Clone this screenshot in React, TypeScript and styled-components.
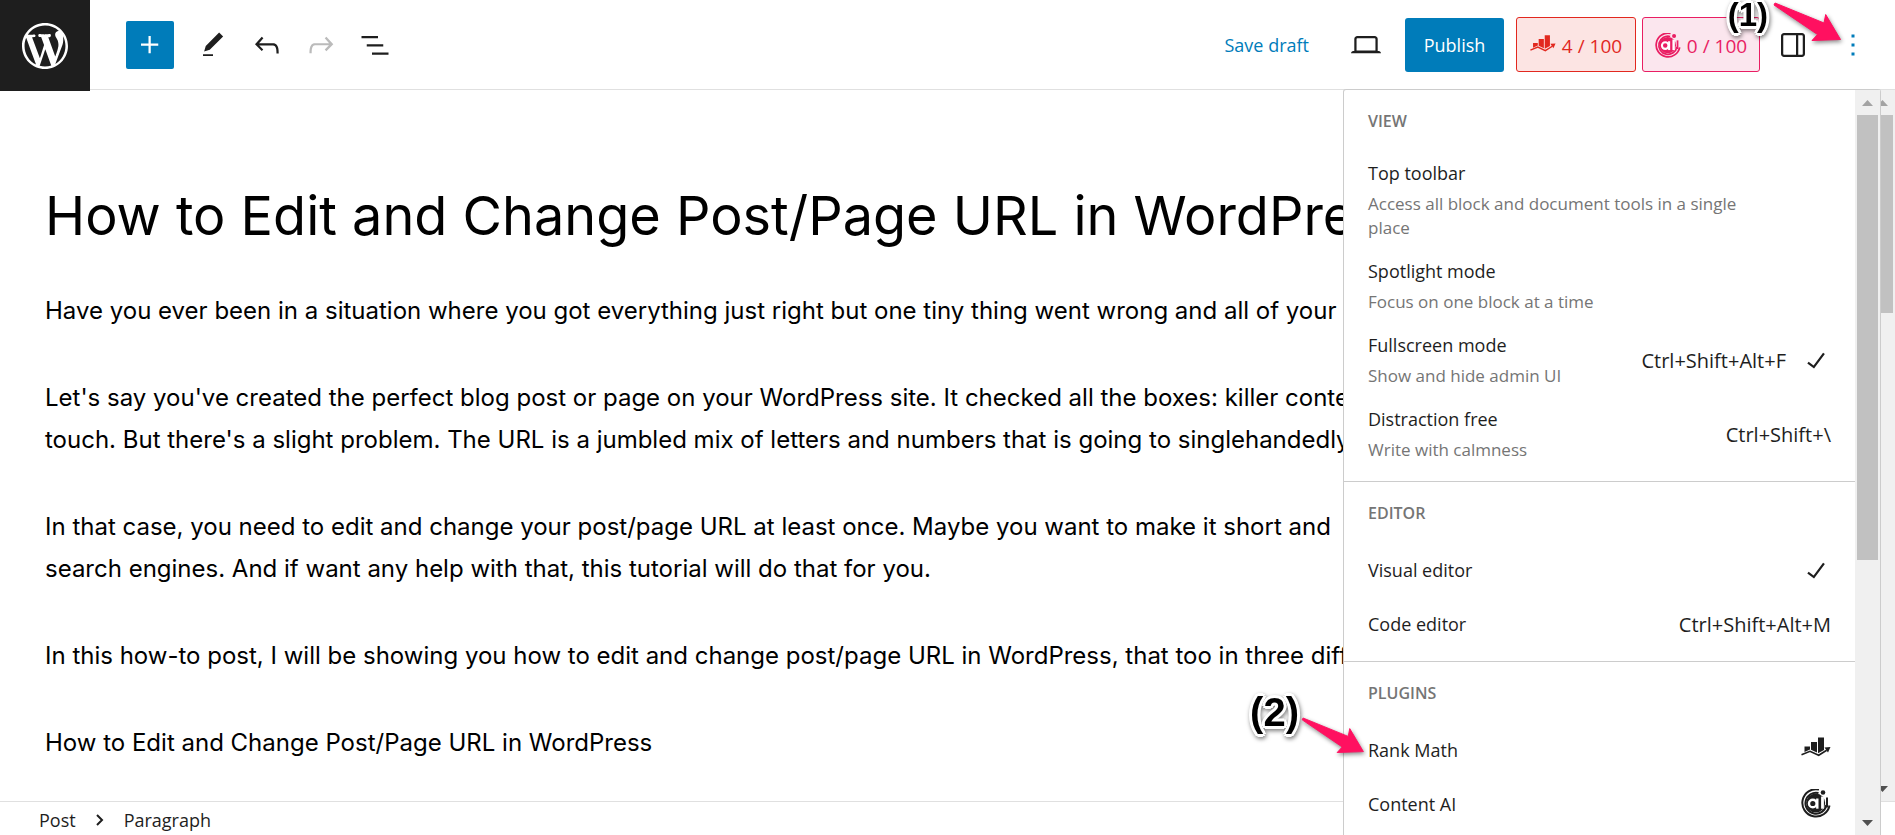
import React from "react";
import styled, { createGlobalStyle, css } from "styled-components";

const Global = createGlobalStyle`
  *, *::before, *::after { box-sizing: border-box; }
  body { margin: 0; background: #fff; overflow: hidden; }
  button { font: inherit; color: inherit; background: none; border: 0; padding: 0; margin: 0; cursor: pointer; }
  svg { display: block; }
`;

const uiFont = `"Segoe UI", "Open Sans", "Noto Sans", sans-serif`;
const blue = "#007cba";
const ink = "#1e1e1e";

const Page = styled.div`
  position: relative;
  display: flex;
  flex-direction: column;
  height: 100vh;
  overflow: hidden;
  font-family: ${uiFont};
  color: ${ink};
`;

const Header = styled.header`
  display: flex;
  align-items: center;
  flex: none;
  height: 90px;
  border-bottom: 1px solid #e0e0e0;
`;

const Home = styled.a`
  display: flex;
  align-items: center;
  justify-content: center;
  align-self: flex-start;
  flex: none;
  width: 90px;
  height: 91px;
  background: ${ink};
  color: #fff;
`;

const Tools = styled.div`
  display: flex;
  align-items: center;
  margin-left: 36px;
`;

const Inserter = styled.button`
  display: flex;
  align-items: center;
  justify-content: center;
  width: 48px;
  height: 48px;
  margin-right: 12px;
  border-radius: 2px;
  background: ${blue};
  color: #fff;
`;

const ToolButton = styled.button<{ $faded?: boolean; $accent?: boolean }>`
  display: flex;
  align-items: center;
  justify-content: center;
  width: 54px;
  height: 54px;
  color: ${(p) => (p.$accent ? blue : p.$faded ? "#bbb" : ink)};
`;

const Actions = styled.div`
  display: flex;
  align-items: center;
  margin-left: auto;
  padding-right: 15px;
  font-size: 18px;
`;

const SaveDraft = styled.button`
  margin-right: 30px;
  color: ${blue};
`;

const Publish = styled.button`
  width: 99px;
  height: 54px;
  margin: 0 12px;
  border-radius: 3px;
  background: ${blue};
  color: #fff;
`;

const Score = styled.button<{ $tone: "red" | "pink" }>`
  display: flex;
  align-items: center;
  justify-content: center;
  gap: 6px;
  width: ${(p) => (p.$tone === "red" ? 120 : 118)}px;
  height: 55px;
  padding-top: 3px;
  margin-right: 6px;
  border: 1px solid;
  border-radius: 3px;
  font-size: 19px;
  ${(p) =>
    p.$tone === "red"
      ? css`color: #e2281f; background: #fce4e3; border-color: #e2281f;`
      : css`color: #e91e63; background: #fbe6ee; border-color: #e91e63;`}
`;

const PanelToggles = styled.div`
  display: flex;
  gap: 6px;
`;

const Body = styled.div`
  display: flex;
  flex: 1;
  min-height: 0;
`;

const Canvas = styled.main`
  flex: 1;
  min-width: 0;
  overflow: hidden;
  padding: 88px 45px 0;
  color: #000;
  font-family: Inter, sans-serif;
  white-space: nowrap;
`;

const Title = styled.h1`
  margin: 0 0 36px;
  font-size: 54px;
  line-height: 76px;
  font-weight: 400;
`;

const Paragraph = styled.p`
  margin: 0 0 45px;
  font-size: 24px;
  line-height: 42px;
`;

const Rail = styled.div`
  display: flex;
  flex-direction: column;
  flex: none;
  width: 25px;
  background: #f0f0f0;
`;

const RailArrow = styled.div<{ $down?: boolean }>`
  display: flex;
  align-items: center;
  justify-content: center;
  height: 25px;
  color: ${(p) => (p.$down ? "#505050" : "#a3a3a3")};
`;

const RailTrack = styled.div`
  flex: 1;
  min-height: 0;
  padding: 0 2px;
`;

const RailThumb = styled.div<{ $share: number }>`
  height: ${(p) => p.$share}%;
  background: #c1c1c1;
`;

const Footer = styled.nav`
  display: flex;
  align-items: center;
  flex: none;
  gap: 20px;
  height: 34px;
  padding: 3px 39px 0;
  border-top: 1px solid #e0e0e0;
  font-size: 18px;
`;

const Menu = styled.div`
  position: absolute;
  top: 89px;
  right: 14px;
  bottom: 0;
  display: flex;
  width: 538px;
  border: 1px solid #ccc;
  border-bottom: 0;
  border-radius: 3px 3px 0 0;
  background: #fff;
`;

const Groups = styled.div`
  flex: 1;
  min-width: 0;
  overflow: hidden;
`;

const Group = styled.section`
  padding: 12px 12px 10px;
  border-bottom: 1px solid #ccc;
`;

const GroupLabel = styled.h2`
  margin: 0 0 11px;
  padding: 0 12px;
  font-size: 16px;
  line-height: 38px;
  font-weight: 600;
  color: #757575;
`;

const Item = styled.button<{ $info?: boolean }>`
  display: flex;
  align-items: center;
  width: 100%;
  min-height: 54px;
  padding: ${(p) => (p.$info ? "6px 12px" : "0 12px")};
  text-align: left;
  font-size: 18px;
`;

const ItemText = styled.span`
  flex: 1;
  max-width: 400px;
  line-height: 32px;
`;

const ItemInfo = styled.span`
  display: block;
  padding: 3px 0;
  font-size: 17px;
  line-height: 24px;
  color: #757575;
`;

const ItemEnd = styled.span<{ $checked?: boolean }>`
  display: flex;
  align-items: center;
  gap: 12px;
  margin-left: auto;
  margin-right: ${(p) => (p.$checked ? -3 : 0)}px;
  font-size: 20px;
`;

const Callout = styled.span<{ $x: number; $y: number; $large?: boolean }>`
  position: absolute;
  right: ${(p) => p.$x}px;
  top: ${(p) => p.$y}px;
  font-family: "Liberation Sans", Arial, sans-serif;
  font-weight: bold;
  font-size: ${(p) => (p.$large ? 40 : 33)}px;
  line-height: ${(p) => (p.$large ? 44 : 28)}px;
  color: #000;
  text-shadow:
    3px 0 #fff, -3px 0 #fff, 0 3px #fff, 0 -3px #fff,
    2px 2px #fff, -2px 2px #fff, 2px -2px #fff, -2px -2px #fff;
  filter: drop-shadow(1px 2px 2px rgba(0, 0, 0, 0.5));
`;

const PointerSvg = styled.svg<{ $x: number; $y: number }>`
  position: absolute;
  right: ${(p) => p.$x}px;
  top: ${(p) => p.$y}px;
  overflow: visible;
  filter: drop-shadow(1px 2px 2px rgba(0, 0, 0, 0.45));
`;

const Pointer = ({ x, y, width, height }: { x: number; y: number; width: number; height: number }) => (
  <PointerSvg $x={x} $y={y} width={width} height={height} viewBox="0 0 67 38" aria-hidden="true">
    <path
      d="M1 0L50 20L51.700 11.500L66.500 36.500L38 37.500L43.500 31.500L0 2Z"
      fill="#ff1060"
      stroke="#ff1060"
      strokeLinejoin="round"
    />
  </PointerSvg>
);

const Icon = ({ d, size = 36 }: { d: string; size?: number }) => (
  <svg width={size} height={size} viewBox="0 0 24 24" fill="currentColor" aria-hidden="true">
    <path d={d} />
  </svg>
);

const paths = {
  plus: "M11 12.5V17.5H12.5V12.5H17.5V11H12.5V6H11V11H6V12.5H11Z",
  pencil: "M20.1 5.1L16.9 2 6.2 12.7l-1.3 4.4 4.5-1.3L20.1 5.1zM4 20.8h8v-1.5H4v1.5z",
  undo: "M18.3 11.7c-.6-.6-1.4-.9-2.3-.9H6.7l2.9-3.3-1.1-1-4.5 5L8.500 16l1-1-2.700-2.700H16c.5 0 .9.2 1.300.5 1 1 1 3.400 1 4.500v.3h1.500v-.2c0-1.500 0-4.300-1.500-5.700z",
  redo: "M15.600 6.500l-1.100 1 2.900 3.300H8c-.9 0-1.700.3-2.300.9-1.400 1.500-1.400 4.200-1.400 5.600v.2h1.500v-.3c0-1.100 0-3.500 1-4.500.3-.3.7-.5 1.300-.5h9.200L14.500 15l1.100 1.100 4.600-4.600-4.600-5z",
  list: "M3 6h11v1.500H3V6zm3.500 5.500h11V13h-11v-1.500zM21 17H10v1.500h11V17z",
  laptop: "M20.5 16h-.7V8c0-1.100-.9-2-2-2H6.200c-1.100 0-2 .9-2 2v8h-.7c-.8 0-1.500.7-1.500 1.500h20c0-.8-.7-1.500-1.500-1.500zM5.700 8c0-.3.2-.5.5-.5h11.600c.3 0 .5.2.5.5v7.600H5.700V8z",
  sidebar: "M18 4H6c-1.100 0-2 .9-2 2v12c0 1.100.9 2 2 2h12c1.100 0 2-.9 2-2V6c0-1.100-.9-2-2-2zm-4 14.500H6c-.3 0-.5-.2-.5-.5V6c0-.3.2-.5.5-.5h8v13zm4.500-.5c0 .3-.2.5-.5.5h-2.500v-13H18c.3 0 .5.2.5.5v12z",
  dots: "M13 19h-2v-2h2v2zm0-6h-2v-2h2v2zm0-6h-2V5h2v2z",
  check: "M16.700 7.100l-6.300 8.500-3.300-2.500-.9 1.200 4.500 3.400L17.900 8z",
  wordpress:
    "M20 10c0-5.510-4.490-10-10-10C4.480 0 0 4.490 0 10c0 5.520 4.480 10 10 10 5.510 0 10-4.480 10-10zM7.780 15.370L4.370 6.220c.55-.02 1.170-.08 1.170-.08.5-.06.44-1.130-.06-1.110 0 0-1.450.11-2.370.11-.18 0-.37 0-.58-.01C4.120 2.690 6.870 1.110 10 1.110c2.330 0 4.450.87 6.050 2.340-.68-.11-1.650.39-1.650 1.580 0 .74.45 1.360.9 2.100.35.61.55 1.360.55 2.460 0 1.490-1.400 5-1.400 5l-3.030-8.370c.54-.02.82-.17.82-.17.5-.05.44-1.250-.06-1.220 0 0-1.440.12-2.380.12-.87 0-2.330-.12-2.330-.12-.5-.03-.56 1.200-.06 1.220l.92.08 1.260 3.410zM17.410 10c.24-.64.74-1.870.43-4.250.7 1.290 1.050 2.710 1.050 4.250 0 3.290-1.730 6.240-4.400 7.780.97-2.590 1.940-5.200 2.920-7.780zM6.100 18.090C3.120 16.650 1.110 13.530 1.110 10c0-1.300.23-2.480.72-3.590C3.250 10.300 4.670 14.200 6.100 18.090zm4.030-6.630l2.580 6.980c-.86.29-1.760.45-2.710.45-.79 0-1.570-.11-2.290-.33.81-2.380 1.620-4.740 2.420-7.100z",
};

const RankIcon = ({ size = 30 }: { size?: number }) => (
  <svg width={size} height={size} viewBox="0 0 30 30" fill="currentColor" aria-hidden="true">
    <path d="M3.500 11.500h5.500v3L3.500 17zM10 7h6v10.500L10 14.700zM17 2.500h6V15l-6 3.200z" />
    <path d="M0.500 19.800l8.500-3.500 8.700 4 8-5" fill="none" stroke="currentColor" strokeWidth="1.600" />
    <path d="M23.500 12.500l6-.5-2.500 5.500z" />
  </svg>
);

const ContentAiIcon = ({ size = 30 }: { size?: number }) => (
  <svg width={size} height={size} viewBox="0 1 30 30" aria-hidden="true">
    <g fill="none" stroke="currentColor" strokeWidth="2">
      <path d="M18 1.500A13.700 13.700 0 1 0 28.500 17.500" />
      <path d="M17.500 5A10.500 10.500 0 1 0 25.300 17" />
    </g>
    <circle cx="14.700" cy="15" r="9.500" fill="currentColor" />
    <circle cx="22" cy="4.500" r="2.300" fill="currentColor" />
    <g fill="none" stroke="#fff">
      <circle cx="11.800" cy="15.500" r="3.800" strokeWidth="2.400" />
      <path d="M16.300 10.500v10.200" strokeWidth="2.400" />
      <path d="M21.500 8.500v12.200" strokeWidth="2.800" />
    </g>
    <path d="M25 9.500h2v10h-2z" fill="currentColor" />
  </svg>
);

const Triangle = ({ down }: { down?: boolean }) => (
  <svg width="11" height="6" viewBox="0 0 11 6" fill="currentColor" aria-hidden="true">
    <path d={down ? "M0 0h11L5.500 6z" : "M0 6h11L5.500 0z"} />
  </svg>
);

const ScrollRail = ({ share }: { share: number }) => (
  <Rail aria-hidden="true">
    <RailArrow><Triangle /></RailArrow>
    <RailTrack><RailThumb $share={share} /></RailTrack>
    <RailArrow $down><Triangle down /></RailArrow>
  </Rail>
);

type Entry = { label: string; info?: string; keys?: string; checked?: boolean; icon?: React.ReactNode };

const groups: { label: string; items: Entry[] }[] = [
  {
    label: "VIEW",
    items: [
      { label: "Top toolbar", info: "Access all block and document tools in a single place" },
      { label: "Spotlight mode", info: "Focus on one block at a time" },
      { label: "Fullscreen mode", info: "Show and hide admin UI", keys: "Ctrl+Shift+Alt+F", checked: true },
      { label: "Distraction free", info: "Write with calmness", keys: "Ctrl+Shift+\\" },
    ],
  },
  {
    label: "EDITOR",
    items: [
      { label: "Visual editor", checked: true },
      { label: "Code editor", keys: "Ctrl+Shift+Alt+M" },
    ],
  },
  {
    label: "PLUGINS",
    items: [
      { label: "Rank Math", icon: <RankIcon /> },
      { label: "Content AI", icon: <ContentAiIcon /> },
    ],
  },
];

export default function App() {
  return (
    <Page>
      <Global />
      <Header>
        <Home href="#" aria-label="View posts">
          <svg width="46" height="46" viewBox="0 0 20 20" fill="currentColor" aria-hidden="true">
            <path d={paths.wordpress} />
          </svg>
        </Home>
        <Tools>
          <Inserter aria-label="Add block"><Icon d={paths.plus} /></Inserter>
          <ToolButton aria-label="Tools"><Icon d={paths.pencil} size={30} /></ToolButton>
          <ToolButton aria-label="Undo"><Icon d={paths.undo} /></ToolButton>
          <ToolButton aria-label="Redo" $faded><Icon d={paths.redo} /></ToolButton>
          <ToolButton aria-label="Document overview"><Icon d={paths.list} /></ToolButton>
        </Tools>
        <Actions>
          <SaveDraft>Save draft</SaveDraft>
          <ToolButton aria-label="Preview"><Icon d={paths.laptop} /></ToolButton>
          <Publish>Publish</Publish>
          <Score $tone="red"><RankIcon size={26} />4 / 100</Score>
          <Score $tone="pink"><ContentAiIcon size={26} />0 / 100</Score>
          <PanelToggles>
            <ToolButton aria-label="Settings"><Icon d={paths.sidebar} /></ToolButton>
            <ToolButton aria-label="Options" $accent><Icon d={paths.dots} /></ToolButton>
          </PanelToggles>
        </Actions>
      </Header>
      <Body>
        <Canvas>
          <Title>How to Edit and Change Post/Page URL in WordPress</Title>
          <Paragraph>Have you ever been in a situation where you got everything just right but one tiny thing went wrong and all of your</Paragraph>
          <Paragraph>
            Let's say you've created the perfect blog post or page on your WordPress site. It checked all the boxes: killer content<br />
            touch. But there's a slight problem. The URL is a jumbled mix of letters and numbers that is going to singlehandedly
          </Paragraph>
          <Paragraph>
            In that case, you need to edit and change your post/page URL at least once. Maybe you want to make it short and<br />
            search engines. And if want any help with that, this tutorial will do that for you.
          </Paragraph>
          <Paragraph>In this how-to post, I will be showing you how to edit and change post/page URL in WordPress, that too in three different</Paragraph>
          <Paragraph>How to Edit and Change Post/Page URL in WordPress</Paragraph>
        </Canvas>
        <ScrollRail share={30} />
      </Body>
      <Footer aria-label="Block breadcrumb">
        <button>Post</button>
        <svg width="8" height="12" viewBox="0 0 8 12" fill="none" stroke="currentColor" strokeWidth="2" aria-hidden="true">
          <path d="M1 1l5 5-5 5" />
        </svg>
        <button>Paragraph</button>
      </Footer>
      <Menu>
        <Groups>
          {groups.map((group) => (
            <Group key={group.label}>
              <GroupLabel>{group.label}</GroupLabel>
              {group.items.map((item) => (
                <Item key={item.label} $info={!!item.info}>
                  <ItemText>
                    {item.label}
                    {item.info && <ItemInfo>{item.info}</ItemInfo>}
                  </ItemText>
                  <ItemEnd $checked={item.checked}>
                    {item.keys}
                    {item.checked && <Icon d={paths.check} />}
                    {item.icon}
                  </ItemEnd>
                </Item>
              ))}
            </Group>
          ))}
        </Groups>
        <ScrollRail share={64} />
      </Menu>
      <Callout $x={127} $y={1}>(1)</Callout>
      <Pointer x={54} y={3} width={67} height={38} />
      <Callout $x={596} $y={690} $large>(2)</Callout>
      <Pointer x={531} y={718} width={62} height={35} />
    </Page>
  );
}
